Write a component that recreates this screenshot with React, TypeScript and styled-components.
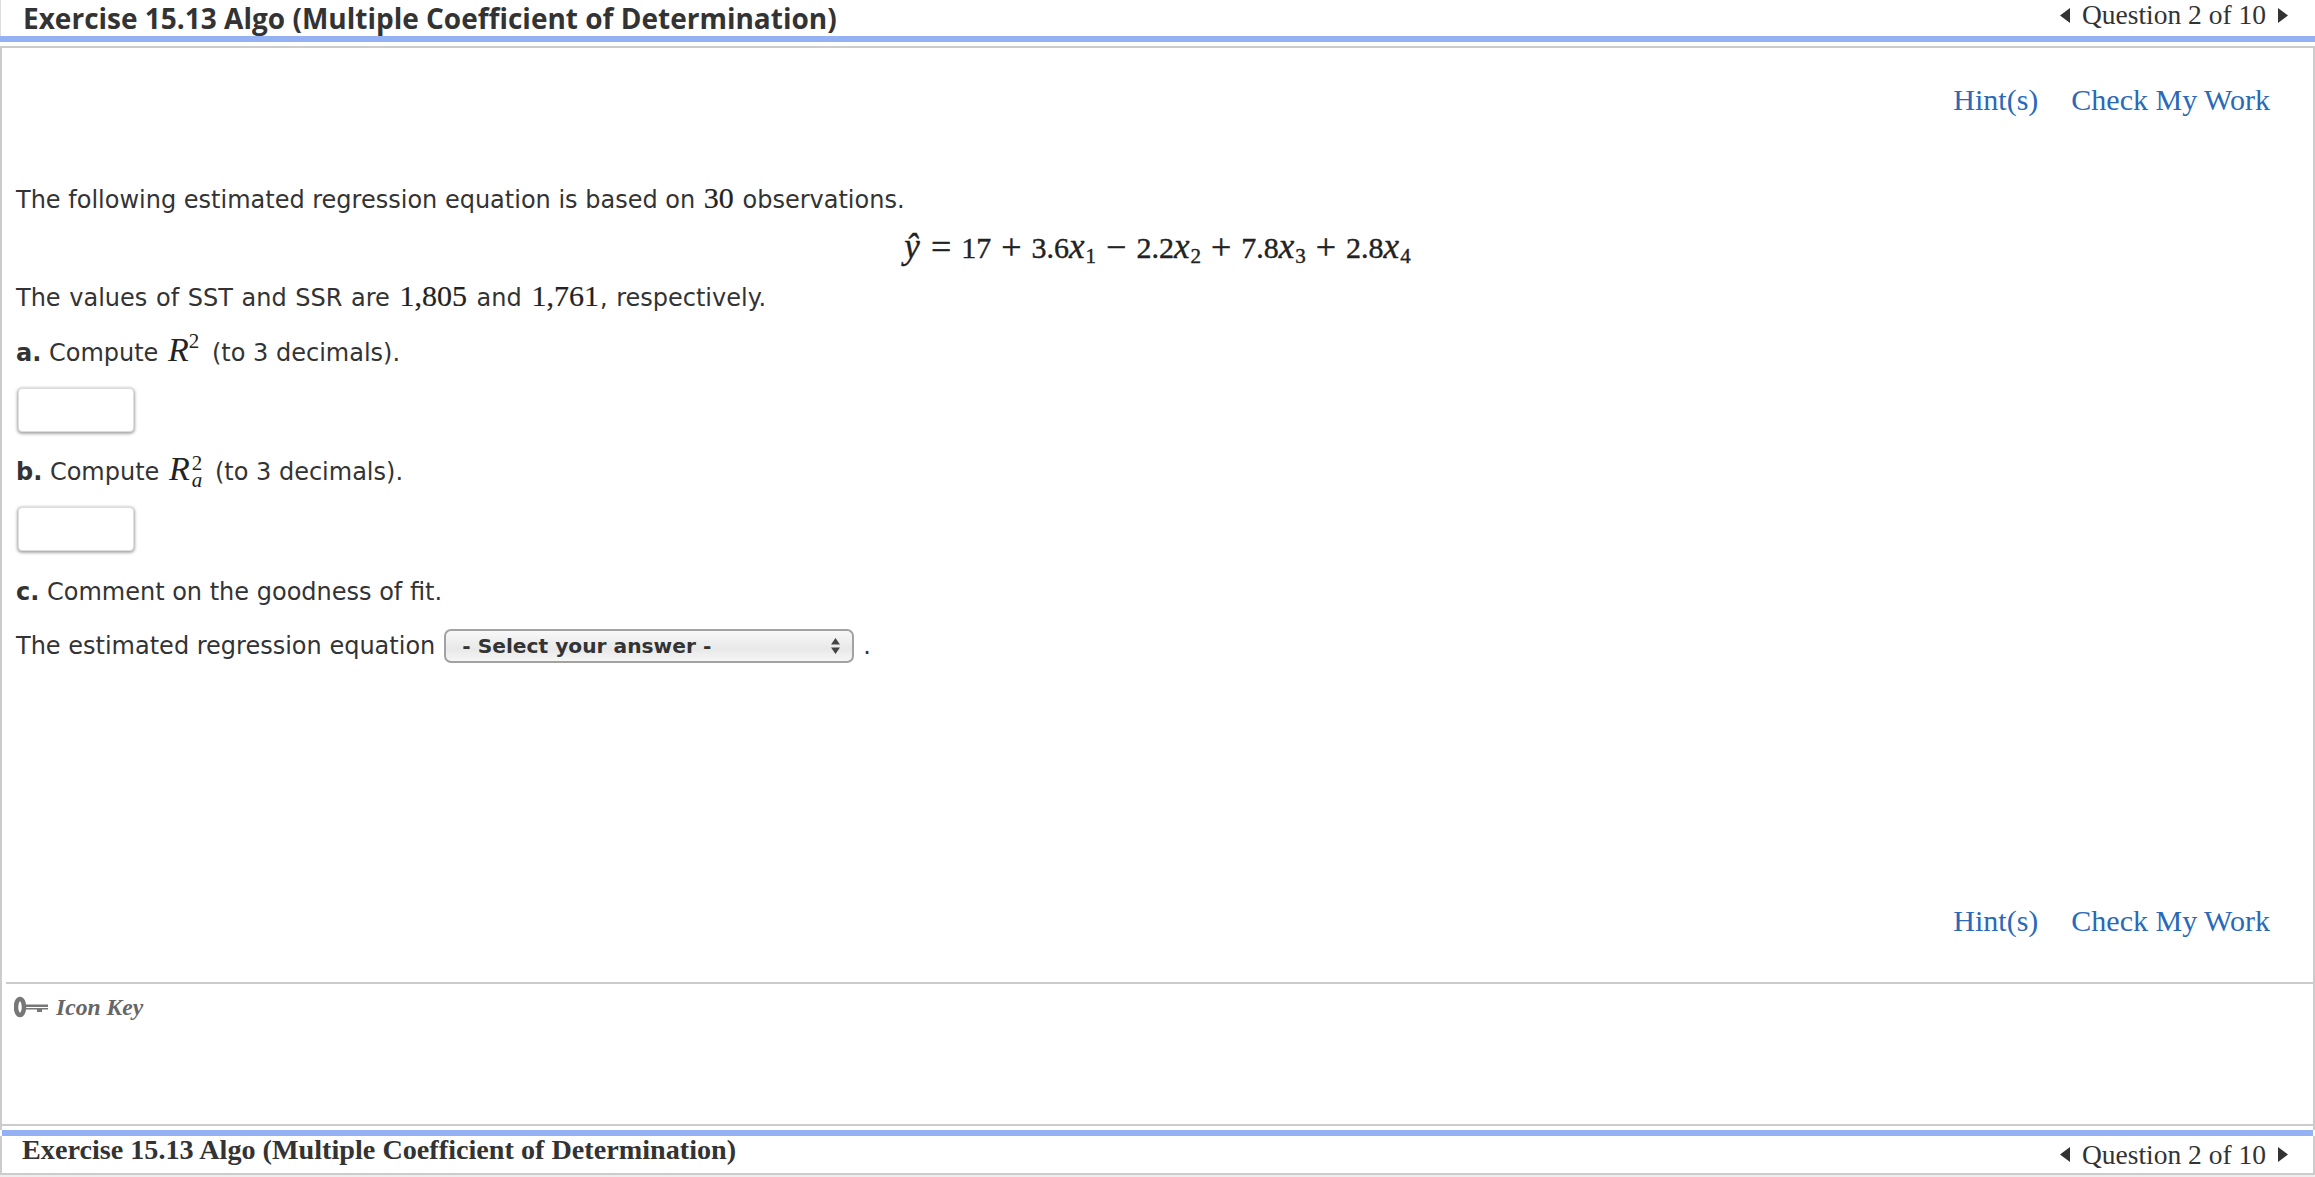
import * as React from "react";
import styled, { createGlobalStyle } from "styled-components";

const GlobalStyle = createGlobalStyle`
  html, body {
    margin: 0;
    padding: 0;
    background: #fff;
  }
  * {
    box-sizing: border-box;
  }
`;

const SERIF = `"Liberation Serif", "Times New Roman", serif`;
const BODY = `"DejaVu Sans", Verdana, sans-serif`;

const Page = styled.div`
  width: 2315px;
  height: 1177px;
  display: flex;
  flex-direction: column;
  overflow: hidden;
  background: #fff;
  color: #333;
`;

const TopHeader = styled.header`
  height: 36px;
  flex: none;
  display: flex;
  align-items: center;
  justify-content: space-between;
  padding: 0 27px 0 22px;
  border-left: 1px solid #ddd;
`;

const TopTitle = styled.h1`
  margin: 0;
  font: 700 28px/36px "Open Sans", sans-serif;
  color: #333;
`;

const QuestionNav = styled.div<{ $lift?: number }>`
  display: flex;
  align-items: center;
  gap: 12px;
  margin-bottom: ${(p) => p.$lift ?? 0}px;
  font: 400 27.5px/28px ${SERIF};
  color: #333;
`;

const BlueBar = styled.div<{ $inset?: boolean }>`
  height: 6px;
  flex: none;
  background: #94b2f3;
  margin: 0 ${(p) => (p.$inset ? "2px" : "0")};
`;

const Panel = styled.main`
  margin-top: 4px;
  height: 1080px;
  flex: none;
  display: flex;
  flex-direction: column;
  border: 2px solid #ccc;
`;

const HintRow = styled.div<{ $top?: boolean }>`
  display: flex;
  justify-content: flex-end;
  gap: 33px;
  height: 40px;
  flex: none;
  margin-top: ${(p) => (p.$top ? "32px" : "auto")};
  padding-right: 43px;
`;

const HintLink = styled.a`
  font: 400 30px/40px ${SERIF};
  color: #2a69b8;
  cursor: pointer;
`;

const Body = styled.section`
  padding: 60px 14px 0 14px;
  font: 400 24px/36px ${BODY};
  color: #333;
`;

const Line = styled.p<{ $gap: number; $spread?: boolean }>`
  margin: ${(p) => p.$gap}px 0 0;
  height: 36px;
  white-space: nowrap;
  word-spacing: ${(p) => (p.$spread ? "1px" : "0")};
`;

const Equation = styled.div`
  margin-top: 13px;
  height: 36px;
  text-align: center;
  font: 400 30px/36px ${SERIF};
  color: #222;
  white-space: nowrap;
  -webkit-text-stroke: 0.4px #222;
`;

const Num = styled.span`
  margin: 0 1px;
  font: 400 30px/36px ${SERIF};
  color: #222;
  -webkit-text-stroke: 0.2px #222;
`;

const MathGroup = styled.span`
  margin: 0 5px 0 2px;
  font: 400 34px/36px ${SERIF};
  color: #222;
`;

const Var = styled.i`
  font-family: ${SERIF};
  font-style: italic;
  font-weight: 400;
`;

const EqVar = styled.i`
  font-style: italic;
  font-size: 35px;
  letter-spacing: 1px;
`;

const Sub = styled.sub`
  font-size: 21px;
  line-height: 0;
  vertical-align: -0.25em;
`;

const Sup = styled.sup`
  font-size: 21px;
  line-height: 0;
  vertical-align: 0.6em;
`;

const Op = styled.span`
  margin: 0 10px;
  font-size: 36px;
  line-height: 0;
  vertical-align: -1px;
`;

const ScriptStack = styled.span`
  display: inline-flex;
  flex-direction: column;
  margin: -12px 0 -12px 2px;
  vertical-align: 10px;
  font: 400 21px/17px ${SERIF};
`;

const Label = styled.b`
  font-weight: 700;
`;

const AnswerBox = styled.input`
  display: block;
  width: 116px;
  height: 44px;
  margin: 20px 0 0 2px;
  background: #fff;
  border: 1px solid #ddd;
  border-radius: 4px;
  box-shadow: 0 1px 3px 1px #aaa;
  outline: none;
`;

const SelectLine = styled.div`
  margin-top: 18px;
  height: 36px;
  display: flex;
  align-items: center;
  white-space: nowrap;
`;

const SelectWrap = styled.span`
  position: relative;
  display: inline-flex;
  margin: 0 9px;
`;

const AnswerSelect = styled.select`
  appearance: none;
  width: 410px;
  height: 34px;
  padding: 0 16px;
  border: 2px solid #a2a2a2;
  border-radius: 7px;
  background: linear-gradient(#f8f8f8, #e8e8e8 60%, #f6f6f6);
  font: 700 20.2px ${BODY};
  color: #333;
`;

const SelectArrows = styled.svg`
  position: absolute;
  right: 14px;
  top: 9px;
  pointer-events: none;
`;

const Divider = styled.div`
  height: 2px;
  flex: none;
  margin: 41px 0 0 4px;
  background: #ccc;
`;

const KeyBar = styled.div`
  height: 140px;
  flex: none;
  display: flex;
  align-items: flex-start;
  gap: 8px;
  padding: 8px 0 0 12px;
`;

const KeyGlyph = styled.svg`
  flex: none;
  margin-top: 3px;
`;

const KeyText = styled.span`
  font: italic 700 23.6px/30px ${SERIF};
  color: #666;
`;

const BottomFooter = styled.footer`
  height: 39px;
  flex: none;
  display: flex;
  align-items: center;
  justify-content: space-between;
  padding: 0 25px 0 20px;
  border: solid #ccc;
  border-width: 0 2px 2px;
`;

const BottomTitle = styled.h2`
  margin: 0 0 10px;
  font: 700 28.2px/30px ${SERIF};
  color: #333;
`;

const BottomGap = styled.div`
  height: 4px;
  flex: none;
  border: solid #ccc;
  border-width: 0 2px;
`;

const BottomEdge = styled.div`
  flex: 1;
  background: #eee;
`;

function Arrow({ dir }: { dir: "left" | "right" }) {
  return (
    <svg width="10" height="15" viewBox="0 0 10 15">
      <path
        d={dir === "left" ? "M10 0V15L0 7.5Z" : "M0 0V15L10 7.5Z"}
        fill="#333"
      />
    </svg>
  );
}

function Nav({ lift }: { lift?: number }) {
  return (
    <QuestionNav $lift={lift}>
      <Arrow dir="left" />
      <span>Question 2 of 10</span>
      <Arrow dir="right" />
    </QuestionNav>
  );
}

function Hints({ top }: { top?: boolean }) {
  return (
    <HintRow $top={top}>
      <HintLink>Hint(s)</HintLink>
      <HintLink>Check My Work</HintLink>
    </HintRow>
  );
}

function KeyIcon() {
  return (
    <KeyGlyph width="34" height="24" viewBox="0 0 34 24">
      <ellipse cx="6" cy="12" rx="4" ry="8" fill="none" stroke="#777" strokeWidth="4.5" />
      <path d="M12 9.5H34V12H12ZM12 13H34V14.5H28V17H23V14.5H12Z" fill="#777" />
    </KeyGlyph>
  );
}

export default function App() {
  return (
    <Page>
      <GlobalStyle />
      <TopHeader>
        <TopTitle>Exercise 15.13 Algo (Multiple Coefficient of Determination)</TopTitle>
        <Nav lift={6} />
      </TopHeader>
      <BlueBar />
      <Panel>
        <Hints top />
        <Body>
          <Line $gap={0}>
            The following estimated regression equation is based on <Num>30</Num> observations.
          </Line>
          <Equation>
            <EqVar>ŷ</EqVar>
            <Op>=</Op>17<Op>+</Op>3.6<EqVar>x</EqVar>
            <Sub>1</Sub>
            <Op>−</Op>2.2<EqVar>x</EqVar>
            <Sub>2</Sub>
            <Op>+</Op>7.8<EqVar>x</EqVar>
            <Sub>3</Sub>
            <Op>+</Op>2.8<EqVar>x</EqVar>
            <Sub>4</Sub>
          </Equation>
          <Line $gap={13} $spread>
            The values of SST and SSR are <Num>1,805</Num> and <Num>1,761</Num>, respectively.
          </Line>
          <Line $gap={18}>
            <Label>a.</Label> Compute{" "}
            <MathGroup>
              <Var>R</Var>
              <Sup>2</Sup>
            </MathGroup>{" "}
            (to 3 decimals).
          </Line>
          <AnswerBox aria-label="R squared" />
          <Line $gap={19}>
            <Label>b.</Label> Compute{" "}
            <MathGroup>
              <Var>R</Var>
              <ScriptStack>
                <span>2</span>
                <Var>a</Var>
              </ScriptStack>
            </MathGroup>{" "}
            (to 3 decimals).
          </Line>
          <AnswerBox aria-label="Adjusted R squared" />
          <Line $gap={23}>
            <Label>c.</Label> Comment on the goodness of fit.
          </Line>
          <SelectLine>
            The estimated regression equation
            <SelectWrap>
              <AnswerSelect aria-label="Answer">
                <option>- Select your answer -</option>
              </AnswerSelect>
              <SelectArrows width="9" height="16" viewBox="0 0 9 16">
                <path d="M4.5 0L9 6.5H0ZM4.5 16L0 9.5H9Z" fill="#444" />
              </SelectArrows>
            </SelectWrap>
            .
          </SelectLine>
        </Body>
        <Hints />
        <Divider />
        <KeyBar>
          <KeyIcon />
          <KeyText>Icon Key</KeyText>
        </KeyBar>
      </Panel>
      <BottomGap />
      <BlueBar $inset />
      <BottomFooter>
        <BottomTitle>Exercise 15.13 Algo (Multiple Coefficient of Determination)</BottomTitle>
        <Nav />
      </BottomFooter>
      <BottomEdge />
    </Page>
  );
}
